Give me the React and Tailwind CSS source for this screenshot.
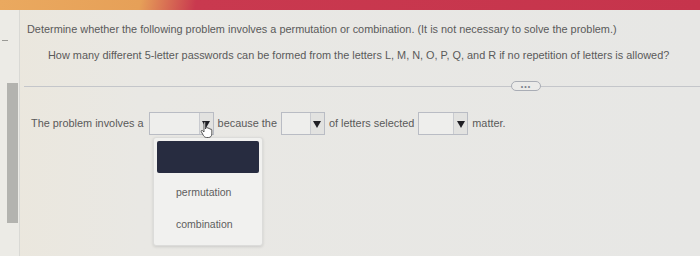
import React from "react";

function Select({ w }) {
  return (
    <div
      className="flex h-[23px] items-stretch border border-[#b9bcc4] bg-[#eeeeec]"
      style={{ width: w }}
    >
      <div className="flex-1" />
      <div className="flex w-[14px] items-center justify-center border-l border-[#c9cbd0] bg-[#e2e2e0]">
        <svg width="8" height="8" viewBox="0 0 8 8">
          <path d="M0 1 L8 1 L4 8 Z" fill="#1f1f24" />
        </svg>
      </div>
    </div>
  );
}

export default function App() {
  return (
    <div
      className="relative h-[256px] w-[700px] overflow-hidden bg-[linear-gradient(90deg,#ebe7dd_0%,#e9e8e4_20%,#e7e7e5_100%)] text-[#5a5a5a]"
      style={{ fontFamily: '"Liberation Sans", Arial, sans-serif' }}
    >
      <div className="h-[10px] w-full bg-[linear-gradient(100deg,#eaa95f_0%,#e6a058_20%,#c9394f_28%,#c6344c_100%)]" />
      <div className="flex h-[246px]">
        <div className="relative w-[20px] shrink-0 border-r border-[#d9d9d5] bg-[#ecebe6]">
          <div className="absolute left-[2px] top-[30px] h-[1px] w-[6px] bg-[#9a9a96]" />
          <div className="absolute left-[7px] top-[73px] h-[140px] w-[11px] bg-[#b3b3af]" />
        </div>
        <div className="flex flex-1 flex-col">
          <div className="pl-[7px] pt-[13px] text-[10.9px] leading-[13px]">
            Determine whether the following problem involves a permutation or combination. (It is not necessary to solve the problem.)
          </div>
          <div className="pl-[28px] pt-[13px] text-[10.9px] leading-[13px]">
            How many different 5-letter passwords can be formed from the letters L, M, N, O, P, Q, and R if no repetition of letters is allowed?
          </div>
          <div className="relative ml-[4px] mt-[24px] h-[1px] bg-[#c4c6ca]">
            <div className="absolute left-[487px] top-[-5px] flex h-[10px] w-[30px] items-center justify-center rounded-full border border-[#a9adb5] bg-[#ebebe9]">
              <span className="text-[7px] leading-[7px] tracking-[1px] text-[#7a7f8a]">•••</span>
            </div>
          </div>
          <div className="relative mt-[25px] flex items-center pl-[11px] text-[10.9px]">
            <span>The problem involves a</span>
            <div className="ml-[5px]">
              <Select w={65} />
            </div>
            <span className="ml-[4px]">because the</span>
            <div className="ml-[4px]">
              <Select w={44} />
            </div>
            <span className="ml-[4px]">of letters selected</span>
            <div className="ml-[4px]">
              <Select w={50} />
            </div>
            <span className="ml-[4px]">matter.</span>
            <div className="absolute left-[133px] top-[25px] flex h-[109px] w-[110px] flex-col rounded-[3px] border border-[#dcdcda] bg-[#f1f1ef] p-[3px] shadow-[0_1px_3px_rgba(0,0,0,0.12)]">
              <div className="h-[32px] w-[102px] rounded-[2px] bg-[#272c40]" />
              <div className="mt-[12px] pl-[19px] text-[10.5px] text-[#5e5e5e]">permutation</div>
              <div className="mt-[16px] pl-[19px] text-[10.5px] text-[#5e5e5e]">combination</div>
            </div>
            <svg className="absolute left-[180px] top-[9px]" width="14" height="18" viewBox="0 0 14 18">
              <path
                d="M4 1.5 C4 0.7 5.5 0.7 5.5 1.5 L5.5 8 L6 6.8 C6.5 6 7.8 6.3 7.8 7.2 L8 7.6 C8.5 6.8 9.8 7.2 9.8 8 L10 8.4 C10.5 7.8 11.8 8.1 11.8 9 L11.8 13 C11.8 15 10.5 16.5 8.5 16.5 L6.5 16.5 C5 16.5 4 15.5 3.3 14.3 L1.2 10.5 C0.8 9.8 1.8 9 2.5 9.6 L4 11 Z"
                fill="#ffffff"
                stroke="#333"
                strokeWidth="0.8"
              />
            </svg>
          </div>
        </div>
      </div>
    </div>
  );
}
